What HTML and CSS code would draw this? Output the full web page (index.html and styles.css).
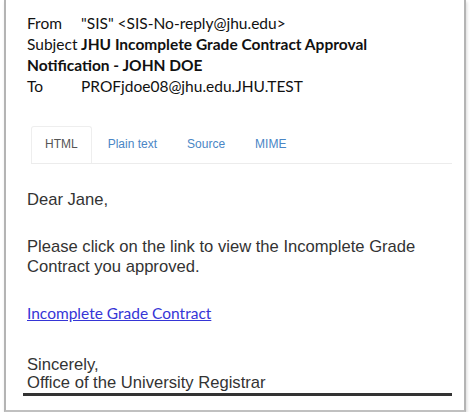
FILE: index.html
```html
<!DOCTYPE html>
<html lang="en">
  <head>
    <meta charset="UTF-8" />
    <title>JHU Incomplete Grade Contract Approval</title>
    <link rel="stylesheet" href="styles.css">
  </head>
  <body>
    <div class="message">
      <div class="headers">
        <p><span class="label">From</span>"SIS" &lt;SIS-No-reply@jhu.edu&gt;</p>
        <p class="subject"><span class="label">Subject</span><span>JHU Incomplete Grade Contract Approval</span><br><span>Notification - JOHN DOE</span></p>
        <p><span class="label">To</span>PROFjdoe08@jhu.edu.JHU.TEST</p>
      </div>

      <ul class="tabs">
        <li class="active">HTML</li>
        <li>Plain text</li>
        <li>Source</li>
        <li>MIME</li>
      </ul>

      <div class="body">
        <p>Dear Jane,</p>
        <p>Please click on the link to view the Incomplete Grade Contract you approved.</p>
        <p class="link"><a href="#">Incomplete Grade Contract</a></p>
        <p class="signature">Sincerely,<br>Office of the University Registrar</p>
      </div>
    </div>
  </body>
</html>
```

FILE: styles.css
```css
body {
  margin: 0;
  padding: 0;
  background: #ffffff;
  font-family: "Liberation Sans", Arial, sans-serif;
}

.message {
  box-sizing: border-box;
  width: 462px;
  height: 412px;
  margin: 0 0 0 4px;
  padding: 13px 12px 0 21px;
  background: white;
  border-left: 2px solid #b4b4b4;
  border-right: 2px solid #b4b4b4;
  border-bottom: 2px solid #c0c0c0;
  box-shadow: 1px 2px 3px rgba(0, 0, 0, 0.15);
}

.headers {
  max-width: 420px;
  font-family: Lato, "Open Sans", sans-serif;
  font-size: 15.5px;
  color: #111;
}

.headers p {
  margin: 0;
  line-height: 21px;
}

.headers .label {
  display: inline-block;
  width: 54px;
  font-weight: normal;
}

.headers .subject {
  font-weight: bold;
}

.tabs {
  list-style: none;
  display: flex;
  margin: 29px 0 0 4px;
  padding: 0;
  border-bottom: 1px solid #ececec;
}

.tabs li {
  padding: 0 13px;
  height: 36px;
  line-height: 35px;
  margin-right: 2px;
  font-size: 12px;
  color: #4a86c5;
  border: 1px solid transparent;
  border-bottom: none;
}

.tabs li.active {
  color: #555;
  border-color: #eeeeee;
  border-radius: 3px 3px 0 0;
}

.body {
  font-size: 16.6px;
  color: #333;
}

.body p {
  margin: 27px 0 0;
  line-height: 20px;
}

.body p:first-child {
  margin-top: 26px;
}

.body .link {
  margin-top: 26px;
}

.body a {
  font-family: Lato, "Open Sans", sans-serif;
  font-size: 15.5px;
  color: #3535d6;
}

.body .signature {
  margin: 32px 0 0 -4px;
  padding: 0 0 1px 4px;
  border-bottom: 3px solid #333;
  line-height: 18px;
}
```
